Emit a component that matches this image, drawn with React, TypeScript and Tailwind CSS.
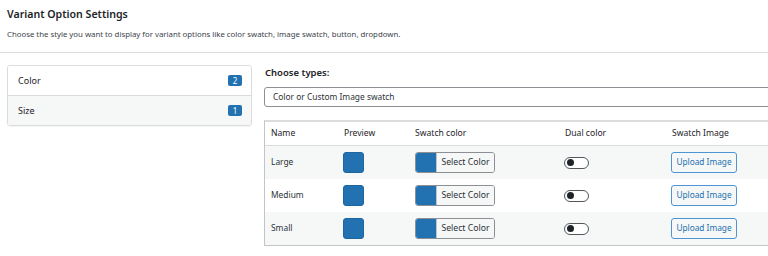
import React from "react";

const rows = [
  { name: "Large", bg: "bg-[#f6f7f7]" },
  { name: "Medium", bg: "bg-white" },
  { name: "Small", bg: "bg-[#f6f7f7]" },
];

function Toggle() {
  return (
    <div className="w-[25px] h-[12px] rounded-full border-[1.5px] border-[#50575e] bg-white flex items-center px-[1.5px]">
      <div className="w-[7px] h-[7px] rounded-full bg-[#1d2327]" />
    </div>
  );
}

export default function App() {
  return (
    <div
      className="w-[768px] h-[256px] overflow-hidden bg-white text-[#1d2327]"
      style={{ fontFamily: '"Noto Sans", "Open Sans", sans-serif' }}
    >
      <div className="pl-[7px] pt-[6px] pb-[11px] border-b border-[#dcdcde]">
        <div className="text-[10.6px] leading-[16px] font-semibold">Variant Option Settings</div>
        <div className="mt-[5px] text-[7.8px] leading-[14px] text-[#3c434a]">
          Choose the style you want to display for variant options like color swatch, image swatch, button, dropdown.
        </div>
      </div>
      <div className="flex pl-[7px] pt-[12px] gap-[12px]">
        <div className="w-[245px] shrink-0 self-start border border-[#dcdcde] rounded-[3px] shadow-[0_1px_1px_rgba(0,0,0,0.04)] overflow-hidden">
          <div className="h-[30px] flex items-center justify-between pl-[10px] pr-[9px] bg-white border-b border-[#dcdcde]">
            <span className="text-[9px]">Color</span>
            <span className="w-[14px] h-[11px] rounded-[2px] bg-[#2271b1] text-white text-[8px] leading-[11px] text-center">2</span>
          </div>
          <div className="h-[29px] flex items-center justify-between pl-[10px] pr-[9px] bg-[#f6f7f7]">
            <span className="text-[9px]">Size</span>
            <span className="w-[14px] h-[11px] rounded-[2px] bg-[#2271b1] text-white text-[8px] leading-[11px] text-center">1</span>
          </div>
        </div>
        <div className="w-[530px] shrink-0">
          <div className="text-[9.5px] leading-[16px] font-semibold pl-[1px]">Choose types:</div>
          <div className="mt-[6px] h-[20px] border border-[#8c8f94] rounded-[3px] flex items-center pl-[8px] text-[8.4px] text-[#2c3338]">
            Color or Custom Image swatch
          </div>
          <div className="mt-[13px] border border-[#c3c4c7] border-t-[2px] border-t-[#dcdcde]">
            <div className="grid grid-cols-[72px_72px_149px_107px_1fr] px-[6px] h-[24px] items-center text-[8.6px] border-b border-[#dcdcde] bg-white">
              <span>Name</span>
              <span className="pl-[1px]">Preview</span>
              <span>Swatch color</span>
              <span className="pl-[1px]">Dual color</span>
              <span className="pl-[1px]">Swatch Image</span>
            </div>
            {rows.map((r) => (
              <div
                key={r.name}
                className={`grid grid-cols-[72px_72px_149px_107px_1fr] px-[6px] h-[33px] items-center text-[8.4px] ${r.bg}`}
              >
                <span className="text-[#2c3338]">{r.name}</span>
                <div className="w-[21px] h-[21px] rounded-[3px] bg-[#2271b1] border border-[#1e66a0]" />
                <div className="w-[80px] h-[21px] flex border border-[#8c8f94] rounded-[3px] overflow-hidden">
                  <div className="w-[20px] h-full bg-[#2271b1]" />
                  <div className="flex-1 bg-[#f6f7f7] border-l border-[#c3c4c7] flex items-center justify-center text-[8.7px] text-[#2c3338]">
                    Select Color
                  </div>
                </div>
                <Toggle />
                <div className="w-[66px] h-[21px] border border-[#4f94d4] rounded-[3px] bg-[#f6f7f7] flex items-center justify-center text-[8.3px] text-[#2271b1]">
                  Upload Image
                </div>
              </div>
            ))}
          </div>
        </div>
      </div>
    </div>
  );
}
